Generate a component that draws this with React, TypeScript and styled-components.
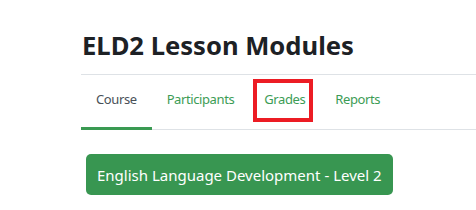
import { FC } from 'react'
import styled, { createGlobalStyle } from 'styled-components'

const GlobalStyle = createGlobalStyle`
  html, body {
    margin: 0;
    padding: 0;
    background: #fff;
  }
  body {
    font-family: "Noto Sans", "Open Sans", "Liberation Sans", sans-serif;
    color: #1d2125;
  }
`

const tabs = ['Course', 'Participants', 'Grades', 'Reports']

const Page = styled.div`
  width: 476px;
  height: 210px;
  padding-left: 81px;
  box-sizing: border-box;
  overflow: hidden;
`

const Header = styled.header`
  padding: 30px 0 12px 1px;
  border-bottom: 1px solid #dee2e6;
`

const Title = styled.h1`
  margin: 0;
  font-size: 25.6px;
  line-height: 32px;
  font-weight: 700;
  color: #1d2125;
  white-space: nowrap;
`

const Nav = styled.nav`
  display: flex;
  border-bottom: 1px solid #dee2e6;
`

const Tab = styled.a<{ $active?: boolean }>`
  position: relative;
  display: flex;
  align-items: center;
  height: 55px;
  padding: 0 15px 4px;
  margin-bottom: -1px;
  box-sizing: border-box;
  font-size: 13px;
  letter-spacing: -0.4px;
  color: ${p => (p.$active ? '#495057' : '#3c9c55')};
  border-bottom: 3px solid ${p => (p.$active ? '#3a9a52' : 'transparent')};
  text-decoration: none;
  white-space: nowrap;
`

const Highlight = styled.span`
  position: absolute;
  left: 4px;
  right: 7px;
  top: 4px;
  height: 43px;
  border: 4px solid #ec1c24;
  box-sizing: border-box;
`

const CourseButton = styled.button`
  margin: 24px 0 0 5px;
  height: 41px;
  padding: 0 11px;
  border: none;
  border-radius: 5px;
  background: #389651;
  color: #fff;
  font-family: inherit;
  font-size: 15px;
  white-space: nowrap;
  cursor: pointer;
`

const App: FC = () => (
  <Page>
    <GlobalStyle />
    <Header>
      <Title>ELD2 Lesson Modules</Title>
    </Header>
    <Nav>
      {tabs.map(t => (
        <Tab key={t} $active={t === 'Course'}>
          {t}
          {t === 'Grades' && <Highlight />}
        </Tab>
      ))}
    </Nav>
    <CourseButton>English Language Development - Level 2</CourseButton>
  </Page>
)

export default App
